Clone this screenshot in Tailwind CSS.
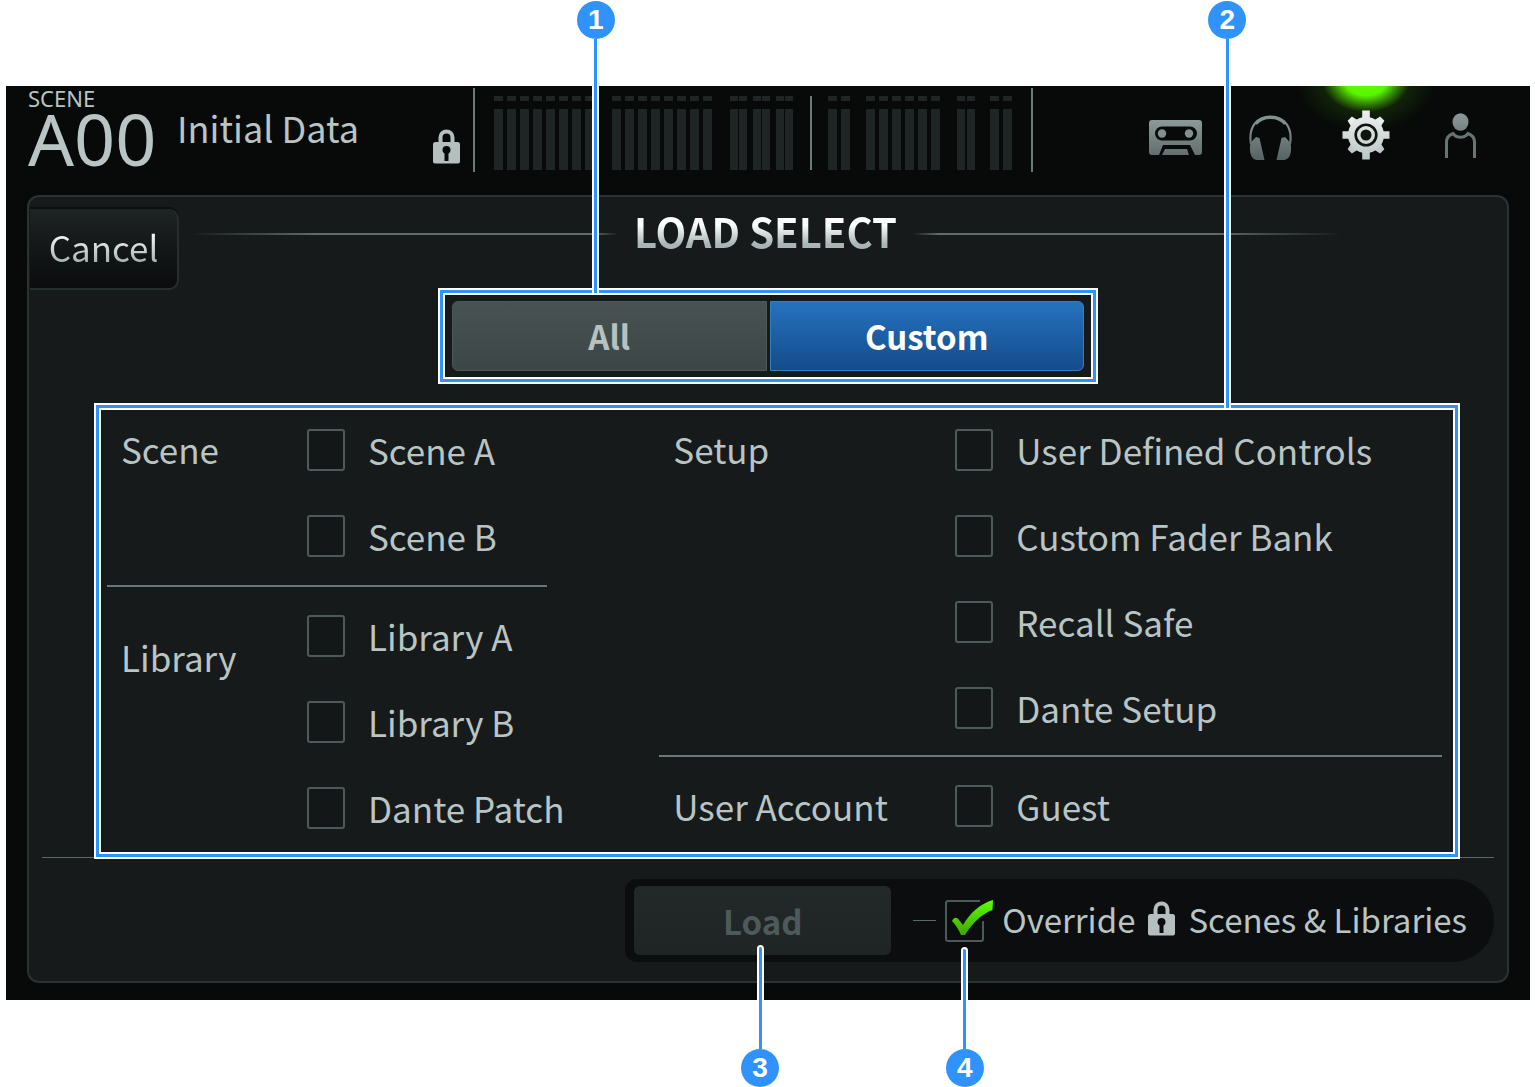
<!DOCTYPE html>
<html lang="en">
<head>
<meta charset="utf-8">
<meta name="viewport" content="width=device-width, initial-scale=1">
<title>Load Select</title>
<script src="https://cdn.jsdelivr.net/npm/@tailwindcss/browser@4"></script>
</head>
<body class="bg-white pt-[86px] pr-[5px] pb-[87px] pl-[6px] font-['Noto_Sans_CJK_JP','Noto_Sans',sans-serif] text-[#b9c4c4]">

<svg class="absolute size-0" aria-hidden="true">
  <defs>
    <symbol id="lock" viewBox="0 0 27 35">
      <path d="M7.500 15V8.500a6 6 0 0 1 12 0V15" fill="none" stroke="#b5bfbf" stroke-width="4"/>
      <path fill="#b5bfbf" fill-rule="evenodd" d="M2.500 13h22a2.500 2.500 0 0 1 2.500 2.500V32.500a2 2 0 0 1-2 2H2a2 2 0 0 1-2-2V15.500A2.500 2.500 0 0 1 2.500 13ZM13.500 17a4 4 0 0 0-4 4c0 1.800 1 3 2 3.500V32h4V24.500c1-.5 2-1.700 2-3.500a4 4 0 0 0-4-4Z"/>
    </symbol>
    <linearGradient id="steel" gradientUnits="userSpaceOnUse" x1="0" y1="0" x2="0" y2="46">
      <stop offset="0" stop-color="#8c9999"/><stop offset="1" stop-color="#566161"/>
    </linearGradient>
    <linearGradient id="bright" gradientUnits="userSpaceOnUse" x1="0" y1="-24" x2="0" y2="24">
      <stop offset="0" stop-color="#eef0f0"/><stop offset="1" stop-color="#bcc6c6"/>
    </linearGradient>
    <linearGradient id="tick" x1="0" y1="0" x2="0" y2="1">
      <stop offset="0" stop-color="#5cff00"/><stop offset="1" stop-color="#3fa50a"/>
    </linearGradient>
  </defs>
</svg>

<main class="bg-[#070a09] px-[21px] pb-[17px]">

  <header class="flex h-[109px] items-start">
    <div class="w-[150px] pl-px font-['Noto_Sans',sans-serif]">
      <div class="pt-px text-[22px] leading-[22px]">SCENE</div>
      <div class="text-[72px] leading-[58px] whitespace-nowrap">A00</div>
    </div>
    <div class="mt-[23px] w-[256px] text-[36px] leading-[36px] whitespace-nowrap">Initial Data</div>
    <svg class="mt-[43px] h-[35px] w-[27px] shrink-0" role="img" aria-label="Locked"><use href="#lock"/></svg>

    <div class="mt-[2px] ml-[13px] h-[84px] w-[2px] shrink-0 bg-[#6b7a7a]"></div>
    <div id="meters" class="mt-[10px] ml-[19px] flex h-[74px] shrink-0" aria-hidden="true"></div>
    <div class="mt-[2px] ml-[19px] h-[84px] w-[2px] shrink-0 bg-[#6b7a7a]"></div>

    <nav class="ml-auto flex h-full pr-px">
      <button type="button" aria-label="Recorder" class="flex w-[95px] items-start justify-center pt-[34px]">
        <svg class="h-[35px] w-[53px]" viewBox="0 0 53 35">
          <path fill="url(#steel)" fill-rule="evenodd" d="M3 0H50a3 3 0 0 1 3 3V32a3 3 0 0 1-3 3H46L41 25H14L10 35H3a3 3 0 0 1-3-3V3A3 3 0 0 1 3 0ZM13 6.500a7 7 0 0 0 0 14H41a7 7 0 0 0 0-14Z"/>
          <path fill="url(#steel)" d="M16 29H38L40 35H13Z"/>
          <circle cx="13" cy="13.500" r="4.200" fill="#829090"/><circle cx="40" cy="13.500" r="4.200" fill="#829090"/>
        </svg>
      </button>
      <button type="button" aria-label="Monitor" class="flex w-[95px] items-start justify-center pt-[29px]">
        <svg class="h-[46px] w-[43px]" viewBox="0 0 43 46">
          <path fill="none" stroke="url(#steel)" stroke-width="2.200" d="M2 29C-1 12 8 1.500 21.500 1.500S44 12 41 29"/>
          <path fill="none" stroke="#829090" stroke-width="2.500" d="M7 9C14 .5 29 .5 36 9"/>
          <path fill="url(#steel)" d="M7 22 10.500 23 15.500 45H9C3 45 .5 40 1 31c0-3 3-6 6-9ZM36 22 32.500 23 27.500 45H34c6 0 8.500-5 8-14 0-3-3-6-6-9Z"/>
        </svg>
      </button>
      <button type="button" aria-label="Setup" aria-current="page" class="relative flex w-[95px] items-start justify-center pt-[24px]">
        <span class="absolute top-0 left-1/2 h-[60px] w-[150px] -translate-x-1/2 bg-[radial-gradient(ellipse_70px_52px_at_50%_-6px,#62ff00_0%,#5cf500_30%,#328605_46%,#112209_62%,transparent_100%)]"></span>
        <svg class="relative h-[50px] w-[48px]" viewBox="-24 -25 48 50">
          <g fill="url(#bright)">
            <path d="M-3.800-24.500H3.800V24.500H-3.800Z"/>
            <path d="M-23.500-3.800V3.800H23.500V-3.800Z"/>
            <path d="M-3-23H3L5-14V14L3 23H-3L-5 14V-14Z" transform="rotate(45)"/>
            <path d="M-3-23H3L5-14V14L3 23H-3L-5 14V-14Z" transform="rotate(-45)"/>
            <circle r="18"/>
          </g>
          <circle r="10.300" fill="none" stroke="#10140f" stroke-width="2.600"/>
          <circle r="5.500" fill="#10140f"/>
        </svg>
      </button>
      <button type="button" aria-label="User" class="flex w-[95px] items-start justify-center pt-[27px]">
        <svg class="h-[46px] w-[33px]" viewBox="0 0 33 46">
          <ellipse cx="16.500" cy="9" rx="8" ry="8.800" fill="url(#steel)"/>
          <path d="M2.500 45V29c0-5 2.500-7 6.500-8.500 4 5 11 5 15 0C28 22 30.500 24 30.500 29V45" fill="none" stroke="#687474" stroke-width="3"/>
        </svg>
      </button>
    </nav>
  </header>

  <section class="rounded-[12px] border-2 border-[#2b3233] bg-[#161a1b]">
    <div class="flex items-start pt-[12px]">
      <button type="button" class="ml-px h-[81px] w-[149px] shrink-0 rounded-r-[10px] border-r-2 border-b-2 border-[#272e2f] bg-linear-to-b from-[#1e2324] to-[#0a0c0d] pb-[4px] text-[35px] leading-[40px] shadow-[0_-2px_0_#0c0f10]"><span class="bg-linear-to-b from-white from-20% to-[#a9b5b5] to-80% bg-clip-text text-transparent">Cancel</span></button>
      <div class="mt-[24px] ml-[10px] h-[2px] flex-1 bg-[linear-gradient(to_right,transparent,#5f6d6d_30%,#5f6d6d_94%,transparent)]"></div>
      <h1 class="mx-[16px] bg-linear-to-b from-white from-35% to-[#a9b5b5] to-80% bg-clip-text text-[40px] leading-[44px] font-bold text-transparent">LOAD SELECT</h1>
      <div class="mt-[24px] h-[2px] flex-1 bg-[linear-gradient(to_left,transparent,#5f6d6d_30%,#5f6d6d_94%,transparent)]"></div>
      <div class="w-[165px] shrink-0"></div>
    </div>

    <div role="group" aria-label="Load range" class="relative mx-auto flex w-[656px] gap-[3px] border-[3px] border-[#3093fb] px-[9px] py-[8px] text-[33px] leading-[36px] font-bold shadow-[0_0_0_2px_white,inset_0_0_0_2px_white]">
      <button type="button" aria-pressed="false" class="h-[70px] flex-1 rounded-l-[6px] border border-[#4b5859] bg-linear-to-b from-[#485253] to-[#3d4646] text-[#b5c2c0]">All</button>
      <button type="button" aria-pressed="true" class="h-[70px] flex-1 rounded-r-[6px] border border-[#3580bd] bg-linear-to-b from-[#2672bf] to-[#144c8b] text-white">Custom</button>
      <div class="absolute bottom-full left-[23.5%] flex -translate-x-1/2 flex-col items-center">
        <span class="z-10 size-[38px] rounded-full bg-[#3093fb] text-center font-['Liberation_Sans',sans-serif] text-[28px] leading-[38px] font-bold text-white">1</span>
        <span class="h-[254px] w-[3px] bg-[#3093fb] shadow-[-2px_0_0_white,2px_0_0_white]"></span>
      </div>
    </div>

    <div role="group" aria-label="Data to load" class="relative z-10 mt-[23px] mr-[49px] ml-[67px] grid grid-cols-[9fr_16fr] gap-[112px] border-[3px] border-[#3093fb] pr-[13px] pl-[8px] text-[35px] leading-[40px] whitespace-nowrap shadow-[0_0_0_2px_white,inset_0_0_0_2px_white]">
      <div class="h-[446px] min-w-0">
        <div class="flex pl-[14px]">
          <h2 class="flex h-[86px] w-[186px] shrink-0 items-center pb-[4px]">Scene</h2>
          <div>
            <label class="flex h-[86px] items-center gap-[23px] pb-[3px]"><input type="checkbox" class="h-[42px] w-[38px] shrink-0 appearance-none rounded-[3px] border-2 border-[#4d595a] bg-[#141718]">Scene A</label>
            <label class="flex h-[86px] items-center gap-[23px] pb-[3px]"><input type="checkbox" class="h-[42px] w-[38px] shrink-0 appearance-none rounded-[3px] border-2 border-[#4d595a] bg-[#141718]">Scene B</label>
          </div>
        </div>
        <hr class="mt-[5px] mb-[7px] border-t-2 border-[#687777]">
        <div class="flex pl-[14px]">
          <h2 class="flex h-[128px] w-[186px] shrink-0 items-center pb-[2px]">Library</h2>
          <div>
            <label class="flex h-[86px] items-center gap-[23px] pb-[2px]"><input type="checkbox" class="h-[42px] w-[38px] shrink-0 appearance-none rounded-[3px] border-2 border-[#4d595a] bg-[#141718]">Library A</label>
            <label class="flex h-[86px] items-center gap-[23px] pb-[2px]"><input type="checkbox" class="h-[42px] w-[38px] shrink-0 appearance-none rounded-[3px] border-2 border-[#4d595a] bg-[#141718]">Library B</label>
            <label class="flex h-[86px] items-center gap-[23px] pb-[2px]"><input type="checkbox" class="h-[42px] w-[38px] shrink-0 appearance-none rounded-[3px] border-2 border-[#4d595a] bg-[#141718]">Dante Patch</label>
          </div>
        </div>
      </div>
      <div class="min-w-0">
        <div class="flex pl-[14px]">
          <h2 class="flex h-[86px] w-[282px] shrink-0 items-center pb-[4px]">Setup</h2>
          <div>
            <label class="flex h-[86px] items-center gap-[23px] pb-[3px]"><input type="checkbox" class="h-[42px] w-[38px] shrink-0 appearance-none rounded-[3px] border-2 border-[#4d595a] bg-[#141718]">User Defined Controls</label>
            <label class="flex h-[86px] items-center gap-[23px] pb-[3px]"><input type="checkbox" class="h-[42px] w-[38px] shrink-0 appearance-none rounded-[3px] border-2 border-[#4d595a] bg-[#141718]">Custom Fader Bank</label>
            <label class="flex h-[86px] items-center gap-[23px] pb-[3px]"><input type="checkbox" class="h-[42px] w-[38px] shrink-0 appearance-none rounded-[3px] border-2 border-[#4d595a] bg-[#141718]">Recall Safe</label>
            <label class="flex h-[86px] items-center gap-[23px] pb-[3px]"><input type="checkbox" class="h-[42px] w-[38px] shrink-0 appearance-none rounded-[3px] border-2 border-[#4d595a] bg-[#141718]">Dante Setup</label>
          </div>
        </div>
        <hr class="mt-[3px] mb-[6px] border-t-2 border-[#687777]">
        <div class="flex pl-[14px]">
          <h2 class="flex h-[86px] w-[282px] shrink-0 items-center">User Account</h2>
          <label class="flex h-[86px] items-center gap-[23px]"><input type="checkbox" class="h-[42px] w-[38px] shrink-0 appearance-none rounded-[3px] border-2 border-[#4d595a] bg-[#141718]">Guest</label>
        </div>
      </div>
      <div class="absolute bottom-full left-[83.2%] flex -translate-x-1/2 flex-col items-center">
        <span class="z-10 size-[38px] rounded-full bg-[#3093fb] text-center font-['Liberation_Sans',sans-serif] text-[28px] leading-[38px] font-bold text-white">2</span>
        <span class="h-[369px] w-[3px] bg-[#3093fb] shadow-[-2px_0_0_white,2px_0_0_white]"></span>
      </div>
    </div>

    <footer class="mx-[13px] flex justify-end border-t border-[#5a6868] pt-[21px] pb-[19px]">
      <div class="flex h-[83px] items-center rounded-l-[12px] rounded-r-[42px] bg-[#0b0d0e] pr-[27px] pl-[9px] text-[33px] leading-[36px] whitespace-nowrap">
        <div class="relative">
          <button type="button" disabled class="h-[69px] w-[257px] rounded-[6px] bg-linear-to-b from-[#232829] to-[#1f2425] font-bold text-[#4d5a5b]">Load</button>
          <div class="absolute top-[59px] left-[49%] flex -translate-x-1/2 flex-col items-center">
            <span class="h-[104px] w-[7px] rounded-t-full border-x-2 border-t-2 border-white bg-[#3093fb]"></span>
            <span class="z-10 size-[38px] rounded-full bg-[#3093fb] text-center font-['Liberation_Sans',sans-serif] text-[28px] leading-[38px] font-bold text-white">3</span>
          </div>
        </div>
        <div class="ml-[22px] h-px w-[23px] bg-[#5a6868]"></div>
        <div class="relative ml-[9px] flex">
          <input id="override" type="checkbox" checked class="h-[42px] w-[39px] appearance-none rounded-[3px] border-2 border-[#4d595a] bg-[#0b0d0e]">
          <svg class="pointer-events-none absolute top-0 left-[5px] h-[38px] w-[44px]" viewBox="0 0 44 38" aria-hidden="true">
            <path d="M30 0H43V18L30 22Z" fill="#0b0d0e"/>
            <path d="M2 21C4 17 7 17 9 20L13 25C19 14 31 3 43 0L42.500 10C31 14 21 25 15 35H11C8.500 29 5 24 2 21Z" fill="url(#tick)"/>
          </svg>
          <div class="absolute top-[47px] left-1/2 flex -translate-x-1/2 flex-col items-center">
            <span class="h-[102px] w-[7px] rounded-t-full border-x-2 border-t-2 border-white bg-[#3093fb]"></span>
            <span class="z-10 size-[38px] rounded-full bg-[#3093fb] text-center font-['Liberation_Sans',sans-serif] text-[28px] leading-[38px] font-bold text-white">4</span>
          </div>
        </div>
        <label for="override" class="ml-[18px] flex items-center gap-[13px] pb-[4px]">Override <svg class="h-[35px] w-[27px]" role="img" aria-label="locked"><use href="#lock"/></svg> Scenes &amp; Libraries</label>
      </div>
    </footer>
  </section>
</main>

<script>
  // Level meter banks: [bar count, bar width, gap between bars, space before]; null is a divider.
  const banks = [[8,9,4,0],[8,9,4,18],[2,8,1,18],[2,8,1,6],[2,8,1,6],null,[2,9,4,16],[6,9,4,16],[2,8,2,17],[2,9,4,15]];
  const meters = document.getElementById('meters');
  for (const bank of banks) {
    const el = document.createElement('div');
    if (!bank) {
      el.className = 'ml-[17px] w-[2px] bg-[#6b7a7a]';
    } else {
      const [count, width, gap, before] = bank;
      el.className = 'flex';
      el.style.gap = gap + 'px';
      el.style.marginLeft = before + 'px';
      for (let i = 0; i < count; i++) {
        const bar = document.createElement('div');
        bar.className = 'flex flex-col gap-[8px]';
        bar.style.width = width + 'px';
        bar.innerHTML = '<i class="h-[5px] bg-[#1f2424]"></i><i class="flex-1 bg-[#1f2424]"></i>';
        el.append(bar);
      }
    }
    meters.append(el);
  }
</script>
</body>
</html>
